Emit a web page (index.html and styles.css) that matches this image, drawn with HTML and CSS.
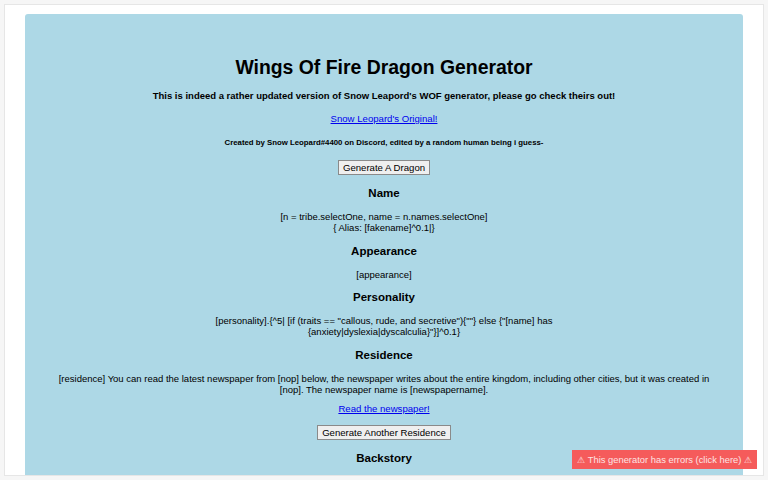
FILE: index.html
```html
<!DOCTYPE html>
<html lang="en">
<head>
    <meta charset="UTF-8">
    <meta name="viewport" content="width=device-width, initial-scale=1.0">
    <title>Wings Of Fire Dragon Generator</title>
    <link rel="stylesheet" href="styles.css">
</head>
<body>
    <div class="frame">
        <div class="panel">
            <h1>Wings Of Fire Dragon Generator</h1>
            <h4>This is indeed a rather updated version of Snow Leapord's WOF generator, please go check theirs out!</h4>
            <a href="#">Snow Leopard's Original!</a>
            <h5>Created by Snow Leopard#4400 on Discord, edited by a random human being i guess-</h5>
            <button>Generate A Dragon</button>

            <h3>Name</h3>
            <p>[n = tribe.selectOne, name = n.names.selectOne]<br>{ Alias: [fakename]^0.1|}</p>

            <h3>Appearance</h3>
            <p>[appearance]</p>

            <h3 class="tight">Personality</h3>
            <p>[personality].{^5| [if (traits == "callous, rude, and secretive"){""} else {"[name] has<br>{anxiety|dyslexia|dyscalculia}"}]^0.1}</p>

            <h3>Residence</h3>
            <p>[residence] You can read the latest newspaper from [nop] below, the newspaper writes about the entire kingdom, including other cities, but it was created in [nop]. The newspaper name is [newspapername].</p>
            <a class="news" href="#">Read the newspaper!</a>
            <button>Generate Another Residence</button>

            <h3>Backstory</h3>
        </div>
    </div>
    <div class="errors">⚠ This generator has errors (click here) ⚠</div>
</body>
</html>
```

FILE: styles.css
```css
html, body {
    height: 100%;
    overflow: hidden;
}

body {
    margin: 0;
    padding: 4px 4px 0;
    box-sizing: border-box;
    background-color: #f6f6f6;
    font-family: 'Liberation Sans', Arial, sans-serif;
    color: #000000;
}

.frame {
    height: 472px;
    box-sizing: border-box;
    background-color: #ffffff;
    border: 1px solid #e6e6e6;
    padding: 9px 20px 0;
    overflow: hidden;
}

.panel {
    background-color: #add8e6;
    border-radius: 3px;
    padding: 41px 30px 30px;
    display: flex;
    flex-direction: column;
    align-items: center;
    gap: 11px;
    text-align: center;
}

h1 {
    margin: 0;
    font-size: 19.4px;
    line-height: 24px;
}

h3 {
    margin: 0;
    font-size: 11.5px;
    line-height: 14px;
}

h3.tight {
    margin-top: -1.5px;
}

h4 {
    margin: 0;
    font-size: 9.5px;
    line-height: 12px;
}

h5 {
    margin: 2px 0 1px;
    font-size: 7.8px;
    line-height: 10px;
}

p {
    margin: 0;
    font-size: 9.5px;
    line-height: 11px;
}

a {
    color: #0000ee;
    font-size: 9.6px;
    line-height: 12px;
}

.news {
    margin-top: -3px;
}

.news + button {
    margin-top: -1px;
}

button {
    height: 15px;
    padding: 0 4px;
    font-family: inherit;
    font-size: 9.6px;
    color: #000000;
    background-color: #efefef;
    border: 1px solid #8a8a8a;
    border-radius: 0;
}

.errors {
    position: fixed;
    right: 11px;
    bottom: 11px;
    padding: 0 5px;
    height: 19px;
    line-height: 19px;
    background-color: #f55b5b;
    color: #fde3e3;
    font-size: 9.4px;
}
```
